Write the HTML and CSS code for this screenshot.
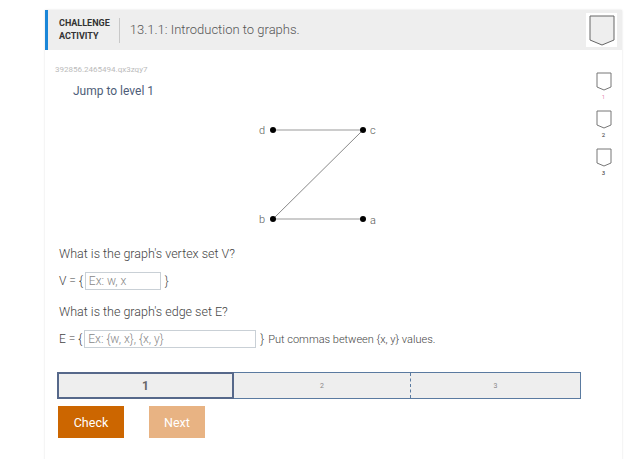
FILE: index.html
```html
<!DOCTYPE html>
<html>
<head>
<meta charset="utf-8">
<link rel="stylesheet" href="styles.css">
</head>
<body>
<div class="page">
  <div class="card">
    <div class="header">
      <div class="kind">CHALLENGE<br>ACTIVITY</div>
      <div class="divider"></div>
      <div class="title">13.1.1: Introduction to graphs.</div>
      <div class="badge">
        <svg width="26" height="31" viewBox="0 0 26 31"><path d="M1 1 H25 V25 L13 30 L1 25 Z" fill="#eeeeee" stroke="#666" stroke-width="1"/></svg>
      </div>
    </div>
    <div class="body">
      <div class="main">
        <div class="code">392856.2465494.qx3zqy7</div>
        <div class="jump">Jump to level 1</div>
        <svg class="graph" width="140" height="112" viewBox="0 0 140 112">
          <line x1="23" y1="10" x2="113" y2="10" stroke="#999" stroke-width="1"/>
          <line x1="113" y1="10" x2="23" y2="99" stroke="#888" stroke-width="1"/>
          <line x1="23" y1="99" x2="113" y2="99" stroke="#999" stroke-width="1"/>
          <circle cx="23" cy="10" r="3" fill="#000"/>
          <circle cx="113" cy="10" r="3" fill="#000"/>
          <circle cx="23" cy="99" r="3" fill="#000"/>
          <circle cx="113" cy="99" r="3" fill="#000"/>
          <text x="9" y="14" class="lbl">d</text>
          <text x="120" y="14" class="lbl">c</text>
          <text x="9" y="103" class="lbl">b</text>
          <text x="120" y="104" class="lbl">a</text>
        </svg>
        <div class="q">What is the graph's vertex set V?</div>
        <div class="ans">
          <span>V = {</span>
          <input class="inp short" placeholder="Ex: w, x">
          <span>}</span>
        </div>
        <div class="q q2">What is the graph's edge set E?</div>
        <div class="ans">
          <span>E = {</span>
          <input class="inp long" placeholder="Ex: {w, x}, {x, y}">
          <span>}</span>
          <span class="hint">Put commas between {x, y} values.</span>
        </div>
        <div class="levels">
          <div class="lvl cur">1</div>
          <div class="lvl mid">2</div>
          <div class="lvl last">3</div>
        </div>
        <div class="buttons">
          <button class="btn check">Check</button>
          <button class="btn next">Next</button>
        </div>
      </div>
      <div class="side">
        <div class="step">
          <svg width="16" height="19" viewBox="0 0 16 19"><path d="M1 1 H15 V15 L8 18 L1 15 Z" fill="#fff" stroke="#777" stroke-width="1"/></svg>
          <div class="num pink">1</div>
        </div>
        <div class="step">
          <svg width="16" height="19" viewBox="0 0 16 19"><path d="M1 1 H15 V15 L8 18 L1 15 Z" fill="#fff" stroke="#777" stroke-width="1"/></svg>
          <div class="num">2</div>
        </div>
        <div class="step">
          <svg width="16" height="19" viewBox="0 0 16 19"><path d="M1 1 H15 V15 L8 18 L1 15 Z" fill="#fff" stroke="#777" stroke-width="1"/></svg>
          <div class="num">3</div>
        </div>
      </div>
    </div>
  </div>
</div>
</body>
</html>
```
FILE: styles.css
```css
html, body {
  margin: 0;
  padding: 0;
  background: #fff;
  font-family: Roboto, "Liberation Sans", Arial, sans-serif;
}
.page {
  padding: 10px 0 0 45px;
}
.card {
  width: 577px;
  height: 470px;
  background: #fff;
  box-shadow: 0 0 2px rgba(0,0,0,0.12);
}
.header {
  height: 40px;
  background: #eeeeee;
  border-left: 3px solid #1a86d8;
  display: flex;
  align-items: center;
  padding-left: 11px;
  box-sizing: border-box;
}
.kind {
  font-size: 9px;
  font-weight: bold;
  line-height: 13px;
  color: #333;
  margin-top: -1px;
}
.divider {
  width: 1px;
  height: 25px;
  background: #c8c8c8;
  margin-left: 9px;
}
.title {
  font-size: 13px;
  font-weight: 300;
  color: #555;
  margin-left: 10px;
  margin-top: -2px;
  flex: 1;
}
.badge {
  width: 31px;
  height: 34px;
  background: #fff;
  margin-right: 5px;
  display: flex;
  align-items: center;
  justify-content: center;
}
.body {
  display: flex;
}
.main {
  flex: 1;
  padding-left: 10px;
}
.code {
  font-size: 8px;
  color: #bbb;
  margin-top: 15px;
  line-height: 10px;
}
.jump {
  font-size: 12px;
  color: #4e5d78;
  margin-left: 18px;
  margin-top: 9px;
  line-height: 14px;
}
.graph {
  display: block;
  margin-left: 195px;
  margin-top: 22px;
}
.lbl {
  font-size: 11px;
  font-weight: 300;
  fill: #555;
  font-family: Roboto, "Liberation Sans", Arial, sans-serif;
}
.q {
  font-size: 12.5px;
  font-weight: 300;
  color: #444;
  margin-left: 4px;
  margin-top: 15px;
  line-height: 14px;
}
.q2 {
  margin-top: 15px;
}
.ans {
  display: flex;
  align-items: center;
  font-size: 12px;
  font-weight: 300;
  color: #444;
  margin-left: 4px;
  margin-top: 11px;
}
.inp {
  height: 18px;
  box-sizing: border-box;
  border: 1px solid #c9d0d6;
  margin: 0 4px 0 2px;
  padding: 0 3px;
  font-family: Roboto, "Liberation Sans", Arial, sans-serif;
  font-size: 12px;
  font-weight: 300;
  color: #555;
}
.inp::placeholder {
  color: #888;
}
.short { width: 76px; }
.long { width: 172px; }
.hint {
  font-size: 11px;
  margin-left: 4px;
}
.levels {
  display: flex;
  margin-top: 24px;
  margin-left: 2px;
  width: 524px;
  height: 27px;
  box-sizing: border-box;
  border: 1px solid #5a7aa0;
  background: #eeeeee;
}
.lvl {
  flex: 1;
  display: flex;
  align-items: center;
  justify-content: center;
  font-size: 7px;
  color: #888;
}
.cur {
  flex: 0 0 177px;
  box-sizing: border-box;
  border: 2px solid #56688a;
  margin: -1px 0 -1px -1px;
  font-size: 12px;
  font-weight: bold;
  color: #666;
}
.mid {
  flex: 0 0 177px;
  box-sizing: border-box;
  border-right: 1px dashed #5a7aa0;
}
.buttons {
  display: flex;
  gap: 25px;
  margin-top: 7px;
  margin-left: 3px;
}
.btn {
  border: none;
  height: 32px;
  color: #fff;
  font-size: 12.5px;
  font-family: Roboto, "Liberation Sans", Arial, sans-serif;
  padding: 0;
}
.check {
  width: 66px;
  background: #cc6600;
}
.next {
  width: 56px;
  background: #e8b383;
}
.side {
  width: 37px;
  display: flex;
  flex-direction: column;
  align-items: center;
  padding-top: 22px;
  gap: 9px;
}
.step {
  display: flex;
  flex-direction: column;
  align-items: center;
}
.num {
  font-size: 6px;
  color: #333;
  line-height: 8px;
  margin-top: 2px;
}
.pink { color: #e890b8; }
```
